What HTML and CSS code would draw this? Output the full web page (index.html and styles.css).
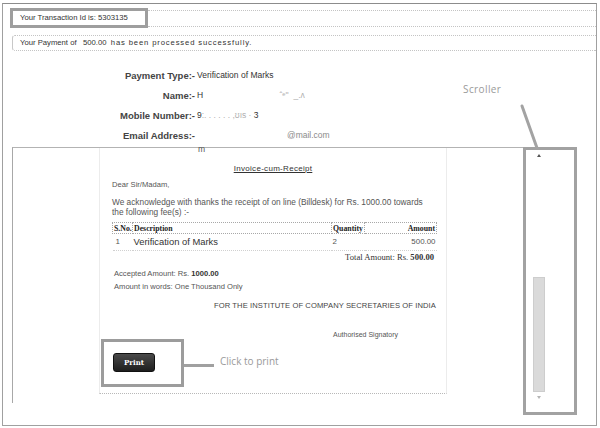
FILE: index.html
```html
<!DOCTYPE html>
<html>
<head>
<meta charset="utf-8">
<link rel="stylesheet" href="styles.css">
</head>
<body>
<div class="frame">
  <div class="txnrow">
    <div class="txn">Your Transaction Id is: 5303135</div>
    <div class="txnfill"></div>
  </div>
  <div class="payrow">Your Payment of &nbsp; 500.00 &nbsp;<span class="wide">has been processed successfully.</span></div>

  <div class="info">
    <div class="lbl">Payment Type:-</div><div class="val">Verification of Marks</div>
    <div class="lbl">Name:-</div><div class="val">H <span class="faint n1">ˆᵉ'' &nbsp;_.ʌ</span></div>
    <div class="lbl">Mobile Number:-</div><div class="val">9<span class="faint">:. . . . . . ,ʊıs · </span>3</div>
    <div class="lbl">Email Address:-</div><div class="val"><span class="faint e1">@mail.com</span></div>
  </div>

  <div class="panel">
    <div class="main">
      <div class="doc">
        <div class="cut">m</div>
        <div class="title">Invoice-cum-Receipt</div>
        <div class="dear">Dear Sir/Madam,</div>
        <div class="ack">We acknowledge with thanks the receipt of on line (Billdesk) for Rs. 1000.00 towards<br>the following fee(s) :-</div>
        <table class="fees">
          <colgroup><col class="w1"><col class="w2"><col class="w3"><col class="w4"></colgroup>
          <tr class="head">
            <th>S.No.</th><th>Description</th><th>Quantity</th><th class="num">Amount</th>
          </tr>
          <tr class="item">
            <td class="first">1</td><td class="big">Verification of Marks</td><td>2</td><td class="num">500.00</td>
          </tr>
        </table>
        <div class="total">Total Amount: Rs. <b>500.00</b></div>
        <div class="summary">
          <div>Accepted Amount: Rs. <b>1000.00</b></div>
          <div>Amount in words: One Thousand Only</div>
        </div>
        <div class="forline">FOR THE INSTITUTE OF COMPANY SECRETARIES OF INDIA</div>
        <div class="sign">Authorised Signatory</div>
        <div class="printrow">
          <div class="printbox"><button class="printbtn">Print</button></div>
          <div class="connector"></div>
          <div class="hint">Click to print</div>
        </div>
      </div>
    </div>
    <div class="scroller">
      <div class="track">
        <div class="arrow up"></div>
        <div class="thumb"></div>
        <div class="arrow down"></div>
      </div>
    </div>
  </div>

  <div class="scroll-label">Scroller</div>
  <svg class="scroll-pointer" width="30" height="48" viewBox="0 0 30 48"><line x1="7" y1="2" x2="22" y2="44" stroke="#a3a3a3" stroke-width="3" stroke-linecap="round"/></svg>
</div>
</body>
</html>
```

FILE: styles.css
```css
html, body { margin: 0; padding: 0; background: #fff; }
body { font-family: "Liberation Sans", Arial, sans-serif; color: #333; }

.frame {
  position: relative;
  margin: 3px 0 0 2px;
  width: 595px;
  height: 423px;
  box-sizing: border-box;
  border: 1px solid #a0a0a0;
  border-top-color: #8c8c8c;
}

.txnrow { display: flex; margin: 4px 0 0 7px; }
.txn {
  width: 138px; height: 20px; box-sizing: border-box;
  border: 3px solid #9e9e9e;
  font-size: 7.7px; line-height: 14px; padding-left: 7px;
  white-space: nowrap; color: #333;
}
.txnfill {
  flex: 1; margin-top: 2px; height: 17px; box-sizing: border-box;
  border-top: 1px dotted #c4c4c4; border-bottom: 1px dotted #c4c4c4;
}

.payrow {
  margin: 7px 0 0 9px; height: 16px; box-sizing: border-box;
  border: 1px dotted #c4c4c4; border-left: 1px solid #c8c8c8; border-right: none;
  border-radius: 3px 0 0 3px;
  font-size: 7.7px; line-height: 14px; padding-left: 7px; color: #333;
  white-space: pre;
}
.wide { letter-spacing: 0.85px; }

.info {
  display: grid;
  grid-template-columns: 192px auto;
  column-gap: 2px;
  grid-auto-rows: 20px;
  align-items: center;
  margin-top: 14px;
}
.lbl { text-align: right; font-weight: bold; font-size: 9.5px; color: #444; }
.val { font-size: 8.5px; color: #333; white-space: nowrap; }
.faint { color: #b0b0b0; }
.n1 { margin-left: 74px; }
.e1 { margin-left: 90px; color: #8a8a8a; }

.panel { display: flex; align-items: flex-start; margin-top: 2px; margin-left: 9px; }
.main {
  width: 510px; height: 255px;
  border-top: 1px solid #b3b3b3; border-left: 1px solid #a8a8a8;
}
.doc {
  margin-left: 86px; width: 348px; box-sizing: border-box;
  border-left: 1px solid #ececec; border-right: 1px solid #ececec;
  border-bottom: 1px dotted #b8b8b8;
  padding-bottom: 6px;
  font-size: 7.6px; color: #444;
}
.cut { height: 8px; line-height: 2px; padding-left: 98px; font-size: 8.5px; color: #555; }
.title {
  margin-top: 8px; line-height: 10px; text-align: center;
  text-decoration: underline; letter-spacing: 0.3px; font-size: 8px; color: #333;
}
.dear { margin-top: 6px; line-height: 10px; padding-left: 12px; color: #555; }
.ack { margin-top: 8px; line-height: 9.5px; padding-left: 12px; white-space: nowrap; font-size: 8.3px; color: #555; }

.fees {
  margin: 5px 0 0 12px; width: 324px;
  border-collapse: collapse; table-layout: fixed;
}
.fees .w1 { width: 20px; }
.fees .w2 { width: 199px; }
.fees .w3 { width: 33px; }
.fees .w4 { width: 72px; }
.fees th, .fees td { padding: 0 1px; white-space: nowrap; overflow: hidden; text-align: left; }
.fees .head th {
  height: 10px; line-height: 9px;
  font-family: "Liberation Serif", "Times New Roman", serif;
  font-weight: bold; font-size: 7.8px; color: #222;
  border: 1px dotted #a8a8a8;
}
.fees .item td {
  height: 16px; line-height: 14px; font-size: 7.9px; color: #555;
  border-bottom: 1px dotted #d0d0d0;
}
.fees .num { text-align: right; }
.fees .item .first { padding-left: 3px; }
.fees .item .big { font-size: 9.4px; color: #333; }

.total {
  margin-top: 1px; line-height: 10px; text-align: right; padding-right: 12px;
  font-family: "Liberation Serif", "Times New Roman", serif; font-size: 8.6px; color: #333;
}
.summary { margin-top: 5px; line-height: 13px; padding-left: 14px; font-size: 7.6px; color: #555; }
.summary b { color: #333; }
.forline { margin-top: 8px; line-height: 10px; text-align: right; padding-right: 10px; font-size: 7.6px; letter-spacing: 0.1px; }
.sign { margin-top: 20px; line-height: 8px; padding-left: 233px; font-size: 7px; color: #555; }

.printrow { display: flex; align-items: flex-start; margin-left: 1px; }
.printbox {
  width: 83px; height: 48px; box-sizing: border-box;
  border: 3px solid #9c9c9c; padding: 11px 0 0 9px;
}
.printbtn {
  display: block; width: 42px; height: 19px; padding: 0; margin: 0;
  border: 1px solid #111; border-radius: 3px;
  background: linear-gradient(#4a4a4a, #1e1e1e);
  color: #fff; font-family: "DejaVu Serif", serif; font-weight: bold; font-size: 7px;
}
.connector { width: 30px; height: 3px; margin-top: 25px; background: #a0a0a0; }
.hint { margin: 16px 0 0 6px; font-family: "Open Sans", sans-serif; font-size: 10px; line-height: 12px; color: #9a9a9a; white-space: nowrap; }

.scroller {
  width: 54px; height: 268px; box-sizing: border-box;
  border: 3px solid #a2a2a2; padding-left: 6px;
}
.track { width: 14px; height: 100%; display: flex; flex-direction: column; align-items: center; }
.arrow { width: 0; height: 0; border-left: 2.5px solid transparent; border-right: 2.5px solid transparent; }
.arrow.up { margin-top: 4px; border-bottom: 3px solid #555; }
.thumb { margin-top: 120px; width: 10px; height: 113px; background: #dadada; border: 1px solid #cdcdcd; }
.arrow.down { margin-top: 4px; border-top: 3px solid #b5b5b5; }

.scroll-label {
  position: absolute; left: 460px; top: 79px;
  font-family: "Open Sans", sans-serif; font-size: 10px; line-height: 12px;
  letter-spacing: 0.4px; color: #9a9a9a;
}
.scroll-pointer { position: absolute; left: 512px; top: 100px; }
```
